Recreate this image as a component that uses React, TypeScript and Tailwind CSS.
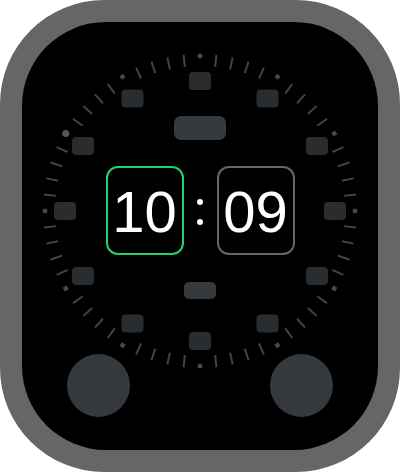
import React from 'react';

const CX = 200;
const CY = 211;

// Minute ring + hour markers, drawn in page coordinates
const Dial: React.FC = () => {
  const marks: React.ReactNode[] = [];
  for (let i = 0; i < 60; i++) {
    const a = (i * 6 * Math.PI) / 180;
    const s = Math.sin(a);
    const c = Math.cos(a);
    if (i % 5 === 0) {
      const x = CX + 155 * s;
      const y = CY - 155 * c;
      if (i === 50) {
        marks.push(<circle key={i} cx={x} cy={y} r={3.5} fill="#55585c" />);
      } else {
        marks.push(
          <rect
            key={i}
            x={x - 2.2}
            y={y - 2.2}
            width={4.4}
            height={4.4}
            fill="#45484c"
            transform={`rotate(${i * 6} ${x} ${y})`}
          />
        );
      }
    } else {
      marks.push(
        <line
          key={i}
          x1={CX + 145 * s}
          y1={CY - 145 * c}
          x2={CX + 157 * s}
          y2={CY - 157 * c}
          stroke="#404347"
          strokeWidth={2}
        />
      );
    }
  }

  const hours = Array.from({ length: 12 }, (_, h) => {
    const a = (h * 30 * Math.PI) / 180;
    const x = CX + 135 * Math.sin(a);
    const y = CY - 130 * Math.cos(a);
    return <rect key={h} x={x - 11} y={y - 9} width={22} height={18} rx={4} fill="#2a2d30" />;
  });

  return (
    <svg className="absolute inset-0 pointer-events-none" width={400} height={472} viewBox="0 0 400 472">
      {marks}
      {hours}
    </svg>
  );
};

const DigitBox: React.FC<{ value: string; active?: boolean }> = ({ value, active }) => (
  <div
    className={`w-[78px] h-[89px] rounded-[12px] border-2 flex items-center justify-center pt-[3px] text-white text-[58px] leading-none ${
      active ? 'border-[#22d172]' : 'border-[#64676c]'
    }`}
  >
    {value}
  </div>
);

export default function App() {
  return (
    <div
      className="relative w-[400px] h-[472px] bg-[#666666] rounded-[104px] p-[22px]"
      style={{ fontFamily: '"Liberation Sans", Arial, sans-serif' }}
    >
      <div className="w-full h-full bg-black rounded-[84px] flex flex-col items-center pt-[94px]">
        <div className="relative z-10 w-[52px] h-[24px] rounded-[7px] bg-[#35383c]" />

        <div className="relative z-10 mt-[26px] flex items-center">
          <DigitBox value="10" active />
          <div className="w-[33px] flex flex-col items-center gap-[14px] pt-[2px]">
            <div className="w-[6px] h-[6px] rounded-full bg-white" />
            <div className="w-[6px] h-[6px] rounded-full bg-white" />
          </div>
          <DigitBox value="09" />
        </div>

        <div className="relative z-10 mt-[27px] w-[32px] h-[17px] rounded-[5px] bg-[#35383c]" />

        <div className="relative z-10 mt-[55px] w-full flex justify-between px-[45px]">
          <div className="w-[63px] h-[63px] rounded-full bg-[#35383c]" />
          <div className="w-[63px] h-[63px] rounded-full bg-[#35383c]" />
        </div>
      </div>
      <Dial />
    </div>
  );
}
